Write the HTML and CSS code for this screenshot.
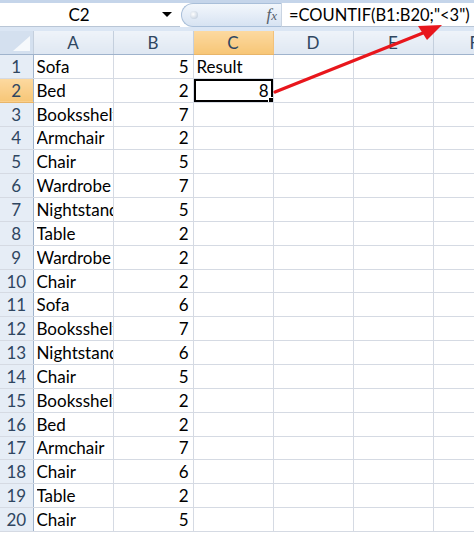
FILE: index.html
```html
<!DOCTYPE html>
<html lang="en">
<head>
    <meta charset="UTF-8">
    <title>COUNTIF</title>
    <link rel="stylesheet" href="styles.css">
</head>
<body>
    <div class="sheet">
        <div class="formula-bar">
            <div class="name-box">
                <span class="cell-ref">C2</span>
                <span class="drop-arrow"></span>
            </div>
            <div class="fx-pill">
                <span class="pill-knob"></span>
                <span class="fx">f<i>x</i></span>
            </div>
            <div class="formula-input">=COUNTIF(B1:B20;"&lt;3")</div>
        </div>

        <table class="grid">
            <colgroup>
                <col class="c-row"><col class="c-col"><col class="c-col"><col class="c-col"><col class="c-col"><col class="c-col"><col>
            </colgroup>
            <thead>
                <tr>
                    <th class="corner"><span class="corner-tri"></span></th>
                    <th>A</th><th>B</th><th class="active">C</th><th>D</th><th>E</th><th class="clip">F</th>
                </tr>
            </thead>
            <tbody id="rows"></tbody>
        </table>

        <svg class="arrow" width="474" height="540" viewBox="0 0 474 540">
            <line x1="275" y1="92" x2="428" y2="31" stroke="#e8161c" stroke-width="3.2" stroke-linecap="round"/>
            <polygon points="442,25 418,26 427,40" fill="#e8161c"/>
        </svg>
    </div>

    <script>
        const data = [
            ['Sofa', 5], ['Bed', 2], ['Booksshelf', 7], ['Armchair', 2], ['Chair', 5],
            ['Wardrobe', 7], ['Nightstand', 5], ['Table', 2], ['Wardrobe', 2], ['Chair', 2],
            ['Sofa', 6], ['Booksshelf', 7], ['Nightstand', 6], ['Chair', 5], ['Booksshelf', 2],
            ['Bed', 2], ['Armchair', 7], ['Chair', 6], ['Table', 2], ['Chair', 5]
        ];
        const body = document.getElementById('rows');
        data.forEach((d, i) => {
            const n = i + 1;
            let c = '<td></td>';
            if (n === 1) c = '<td class="txt">Result</td>';
            if (n === 2) c = '<td class="num selected">8<span class="handle"></span></td>';
            const row = document.createElement('tr');
            row.innerHTML = `
                <th class="row-head${n === 2 ? ' active' : ''}">${n}</th>
                <td class="txt"><div class="clip-text">${d[0]}</div></td>
                <td class="num">${d[1]}</td>
                ${c}<td></td><td></td><td></td>
            `;
            body.appendChild(row);
        });
    </script>
</body>
</html>
```

FILE: styles.css
```css
body {
    margin: 0;
    padding: 0;
    background: #fff;
    font-family: Lato, "Open Sans", sans-serif;
    color: #000;
}

.sheet {
    position: relative;
    width: 474px;
    height: 540px;
    overflow: hidden;
}

.formula-bar {
    display: flex;
    height: 31px;
    box-sizing: border-box;
    border-top: 3px solid #c5d5ea;
    border-bottom: 4px solid #dbe6f4;
    background: #fff;
}

.name-box {
    width: 180px;
    display: flex;
    align-items: center;
    border-bottom: 1px solid #b9c6d6;
}

.cell-ref {
    width: 158px;
    text-align: center;
    font-size: 17px;
}

.drop-arrow {
    width: 0;
    height: 0;
    border-left: 5px solid transparent;
    border-right: 5px solid transparent;
    border-top: 5px solid #000;
    margin-left: 4px;
}

.fx-pill {
    width: 100px;
    margin: 0 0 0 1px;
    display: flex;
    align-items: center;
    justify-content: space-between;
    border: 1px solid #a9bfd9;
    border-right: none;
    border-radius: 13px 0 0 13px;
    background: linear-gradient(#f3f7fc, #d7e3f2);
    padding: 0 4px 0 8px;
    box-sizing: border-box;
}

.pill-knob {
    width: 8px;
    height: 8px;
    border-radius: 50%;
    background: radial-gradient(circle at 40% 40%, #fff, #b5c4d6);
}

.fx {
    font-family: "Liberation Serif", serif;
    font-style: italic;
    font-size: 17px;
    color: #56606c;
}

.fx i {
    font-size: 13px;
}

.formula-input {
    flex: 1;
    padding-left: 7px;
    font-size: 16.5px;
    line-height: 24px;
    border-left: 1px solid #c9d4e2;
    border-bottom: 1px solid #b9c6d6;
    white-space: nowrap;
}

.grid {
    border-collapse: collapse;
    table-layout: fixed;
    width: 520px;
    font-size: 17px;
}

.c-row { width: 33px; }
.c-col { width: 80px; }

.grid th,
.grid td {
    height: 22.85px;
    padding: 0;
    border-right: 1px solid #d5dae3;
    border-bottom: 1px solid #d5dae3;
    overflow: hidden;
    white-space: nowrap;
}

.grid thead th {
    height: 23px;
    font-weight: normal;
    color: #2f4661;
    background: linear-gradient(#eef3f9, #dfe7f2);
    border-right: 1px solid #c4cfdd;
    border-bottom: 1px solid #9fb3cc;
}

.grid thead th.clip {
    text-align: left;
    padding-left: 36px;
}

.grid th.corner {
    background: #d4e0ef;
    position: relative;
}

.corner-tri {
    position: absolute;
    right: 3px;
    bottom: 3px;
    width: 0;
    height: 0;
    border-left: 17px solid transparent;
    border-bottom: 15px solid #f6f9fc;
}

.grid th.active {
    background: linear-gradient(#fcd9a0, #f7c677);
    border-color: #e8b56a #f2c17a;
}

.row-head {
    font-weight: normal;
    color: #2f4661;
    background: #e6edf6;
    border-right: 1px solid #9fb3cc !important;
    text-align: center;
}

.txt {
    padding-left: 3px !important;
}

.clip-text {
    overflow: hidden;
    width: 77px;
}

.num {
    text-align: right;
    padding-right: 4px !important;
}

.selected {
    position: relative;
}

.selected::after {
    content: "";
    position: absolute;
    left: -1px;
    top: -1px;
    right: -1px;
    bottom: -1px;
    border: 3px solid #000;
}

.handle {
    position: absolute;
    right: -3px;
    bottom: -3px;
    width: 6px;
    height: 6px;
    background: #000;
    border: 1px solid #fff;
    z-index: 2;
}

.arrow {
    position: absolute;
    left: 0;
    top: 0;
    pointer-events: none;
}
```
